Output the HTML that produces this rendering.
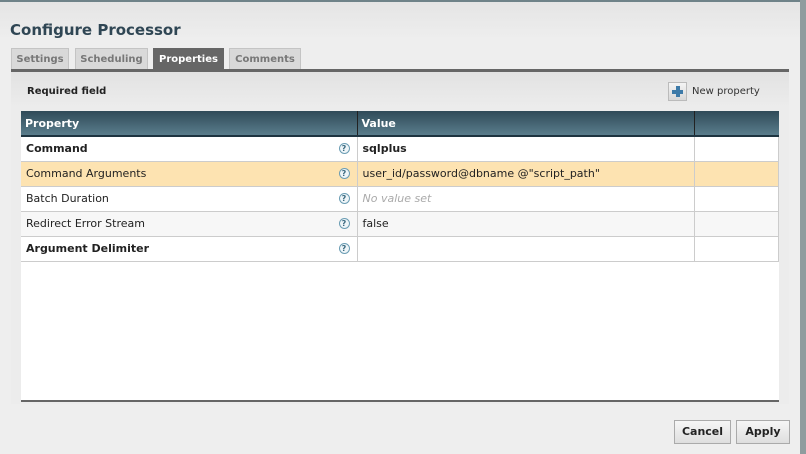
<!DOCTYPE html>
<html><head><style>
*{margin:0;padding:0;box-sizing:border-box}
body{width:806px;height:454px;overflow:hidden;background:#8e9c9e;font-family:"DejaVu Sans","Liberation Sans",sans-serif;position:relative}
#dlg{position:absolute;left:0;top:0;width:800px;height:454px;background:linear-gradient(#e4e4e4,#eeeeee 40px,#eeeeee)}
.topb{position:absolute;left:0;top:0;width:800px;height:2px;background:#6f8389}
.title{position:absolute;left:10px;top:21px;font-size:15px;font-weight:bold;color:#2f4654}
.tab{position:absolute;top:48px;height:22px;font-size:10px;font-weight:bold;color:#777;background:#d9d9d9;border:1px solid #c4c4c4;border-bottom:none;padding:5px 0 0;text-align:center}
.tab.on{background:#666;color:#fff;border-color:#666}
.bar{position:absolute;left:11px;top:69px;width:778px;height:3px;background:#666}
.panel{position:absolute;left:11px;top:72px;width:778px;height:332px;background:linear-gradient(#e2e2e2,#ececec 35px)}
.req{position:absolute;left:27px;top:86px;font-size:10px;font-weight:bold;color:#222}
.np{position:absolute;left:668px;top:82px;width:19px;height:19px;border:1px solid #bbb;background:linear-gradient(#f4f4f4,#d8d8d8)}
.npt{position:absolute;left:692px;top:86px;font-size:10px;color:#333}
table{position:absolute;left:21px;top:111px;width:758px;border-collapse:collapse;font-size:11px;color:#222}
th{height:25px;background:linear-gradient(#2f4a58,#5a7d8c);color:#fff;text-align:left;padding-left:4px;font-size:11px;border-right:1px solid #222;border-bottom:2px solid #1e3440}
td{height:25px;border-bottom:1px solid #ccc;border-right:1px solid #ccc;padding-left:5px;position:relative;background:#fff}
tr.y td{background:#fde3b1}
tr.g td{background:#f7f7f7}
.q{position:absolute;right:7px;top:6px;width:11px;height:11px;border:1px solid #6b9db4;border-radius:50%;font-size:8px;line-height:9px;text-align:center;color:#3c6a80;background:#eef5f8;font-weight:bold}
.body{position:absolute;left:21px;top:261px;width:758px;height:141px;background:#fff;border-bottom:2px solid #666}
.btn{position:absolute;top:420px;height:24px;border:1px solid #aaa;background:linear-gradient(#f6f6f6,#dedede);font-size:11px;font-weight:bold;color:#222;text-align:center;line-height:22px}
</style></head><body>
<div id="dlg">
<div class="topb"></div>
<div class="title">Configure Processor</div>
<div class="tab" style="left:11px;width:58px">Settings</div>
<div class="tab" style="left:75px;width:73px">Scheduling</div>
<div class="tab on" style="left:153px;width:71px">Properties</div>
<div class="tab" style="left:229px;width:72px">Comments</div>
<div class="bar"></div>
<div class="panel"></div>
<div class="req">Required field</div>
<div class="np"><svg width="17" height="17"><rect x="7" y="3" width="4" height="11" fill="#3d7aa8"/><rect x="3" y="7" width="11" height="4" fill="#3d7aa8"/></svg></div>
<div class="npt">New property</div>
<div class="body"></div>
<table>
<tr><th style="width:336px">Property</th><th style="width:337px">Value</th><th style="border-right:none"></th></tr>
<tr><td style="font-weight:bold">Command<span class="q">?</span></td><td style="font-weight:bold">sqlplus</td><td></td></tr>
<tr class="y"><td>Command Arguments<span class="q">?</span></td><td>user_id/password@dbname @"script_path"</td><td></td></tr>
<tr><td>Batch Duration<span class="q">?</span></td><td style="color:#aaa;font-style:italic">No value set</td><td></td></tr>
<tr class="g"><td>Redirect Error Stream<span class="q">?</span></td><td>false</td><td></td></tr>
<tr><td style="font-weight:bold">Argument Delimiter<span class="q">?</span></td><td></td><td></td></tr>
</table>
<div class="btn" style="left:674px;width:57px">Cancel</div>
<div class="btn" style="left:736px;width:54px">Apply</div>
</div>
</body></html>
